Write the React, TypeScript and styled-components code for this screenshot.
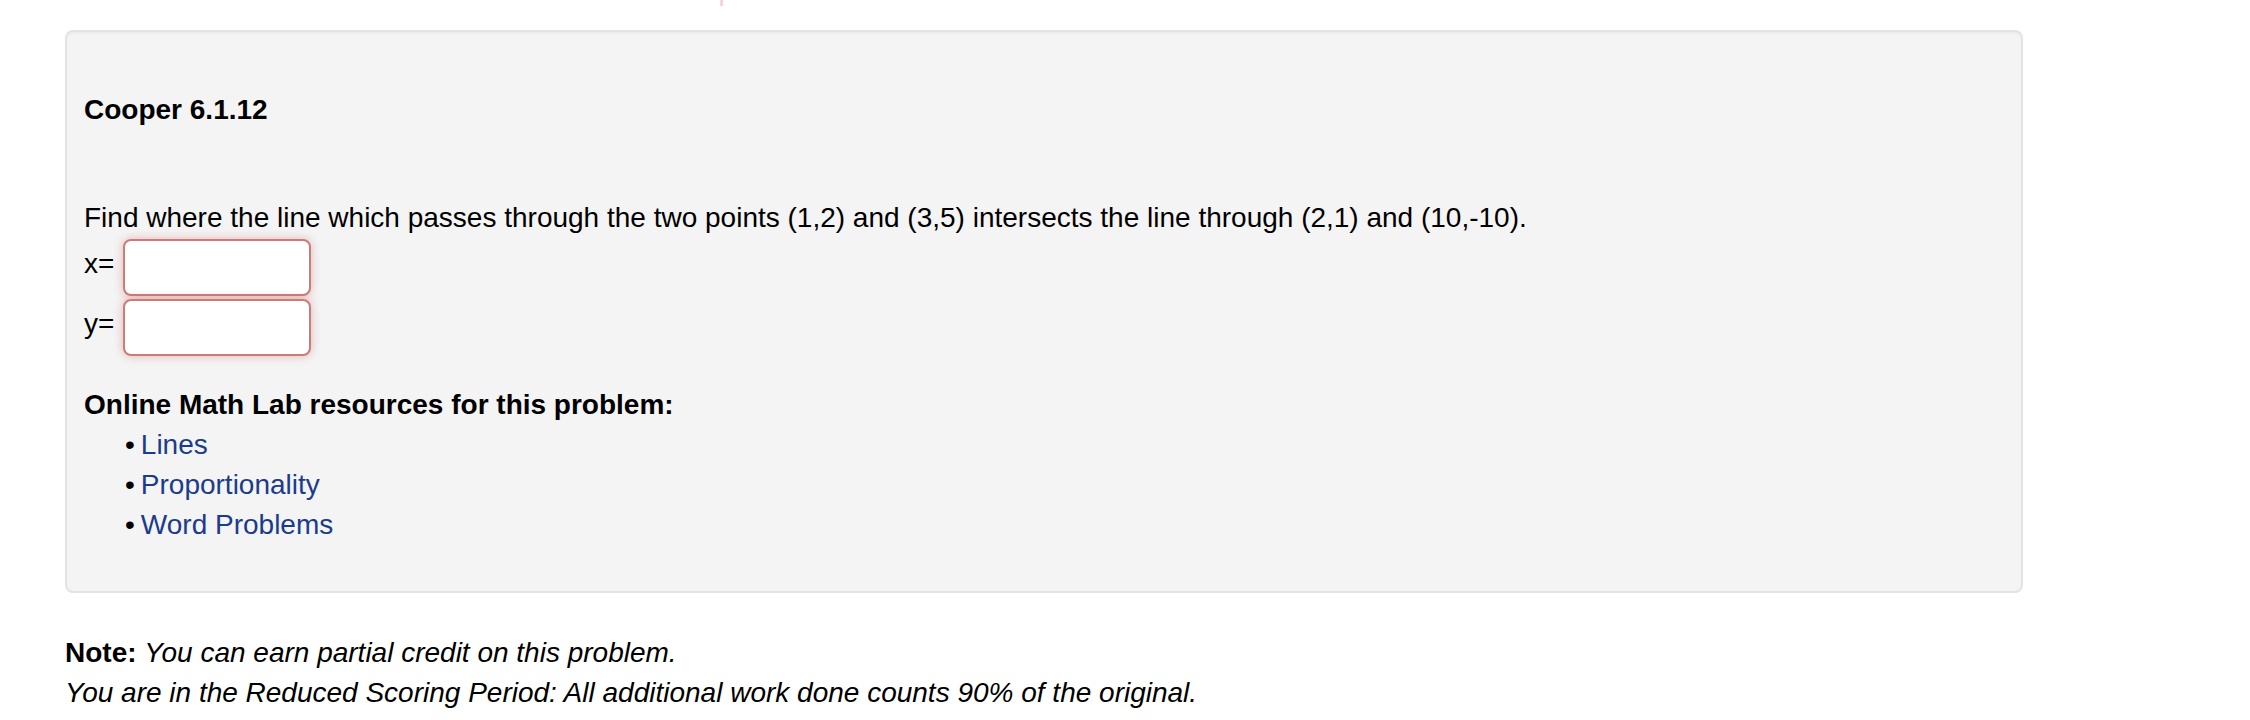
import styled, { createGlobalStyle } from "styled-components";

const GlobalStyle = createGlobalStyle`
  body {
    margin: 0;
    background: #fff;
    color: #000;
    font-family: "Liberation Sans", Helvetica, Arial, sans-serif;
    font-size: 28px;
    line-height: 40px;
  }
`;

const resources = ["Lines", "Proportionality", "Word Problems"];

const App = () => {
  return (
    <>
      <GlobalStyle />
      <Page>
        <CutLine>Results for this submission are shown above the problem</CutLine>

        <Well>
          <Title>Cooper 6.1.12</Title>

          <Question>
            Find where the line which passes through the two points (1,2) and
            (3,5) intersects the line through (2,1) and (10,-10).
          </Question>

          <Answers>
            <AnswerRow>
              <AnswerLabel>x=</AnswerLabel>
              <AnswerInput type="text" aria-label="x" />
            </AnswerRow>
            <AnswerRow>
              <AnswerLabel>y=</AnswerLabel>
              <AnswerInput type="text" aria-label="y" />
            </AnswerRow>
          </Answers>

          <ResourceTitle>Online Math Lab resources for this problem:</ResourceTitle>
          <ResourceList>
            {resources.map((name) => (
              <ResourceItem key={name}>
                <ResourceLink href="#">{name}</ResourceLink>
              </ResourceItem>
            ))}
          </ResourceList>
        </Well>

        <Note $first>
          <strong>Note:</strong> <em>You can earn partial credit on this problem.</em>
        </Note>
        <Note>
          <em>
            You are in the Reduced Scoring Period: All additional work done counts
            90% of the original.
          </em>
        </Note>
      </Page>
    </>
  );
};

export default App;

const Page = styled.div`
  padding-left: 65px;
  width: 1958px;
`;

// the line above the well is scrolled off; only the foot of its letters shows
const CutLine = styled.div`
  margin-top: -29px;
  padding-left: 45px;
  color: #f2d0d0;
  white-space: nowrap;
`;

const Well = styled.div`
  box-sizing: border-box;
  width: 1958px;
  margin-top: 19px;
  padding: 58px 17px 46px;
  background-color: #f4f4f4;
  border: 2px solid #e3e3e3;
  border-radius: 8px;
  box-shadow: inset 0 2px 2px rgba(0, 0, 0, 0.03);
`;

const Title = styled.h3`
  margin: 0;
  font-size: 28px;
  line-height: 40px;
  font-weight: bold;
`;

const Question = styled.p`
  margin: 68px 0 0;
`;

const Answers = styled.div`
  display: flex;
  flex-direction: column;
  gap: 3px;
  margin-top: 1px;
`;

const AnswerRow = styled.div`
  display: flex;
  align-items: center;
  gap: 9px;
`;

const AnswerLabel = styled.span`
  padding-bottom: 8px;
`;

const AnswerInput = styled.input`
  box-sizing: border-box;
  width: 188px;
  height: 57px;
  margin: 0;
  padding: 4px 12px;
  background: #fff;
  border: 2px solid #c97c78;
  border-radius: 8px;
  box-shadow: 0 0 10px rgba(201, 90, 86, 0.4);
  font: inherit;
  outline: none;
`;

const ResourceTitle = styled.div`
  margin-top: 29px;
  font-weight: bold;
`;

const ResourceList = styled.ul`
  margin: 0;
  padding-left: 41px;
  list-style: none;
`;

const ResourceItem = styled.li`
  &::before {
    content: "•";
    margin-right: 6px;
  }
`;

const ResourceLink = styled.a`
  color: #1b3b8d;
  text-decoration: none;
`;

const Note = styled.div<{ $first?: boolean }>`
  margin-top: ${(props) => (props.$first ? "40px" : "0")};

  strong {
    font-weight: bold;
  }
`;
